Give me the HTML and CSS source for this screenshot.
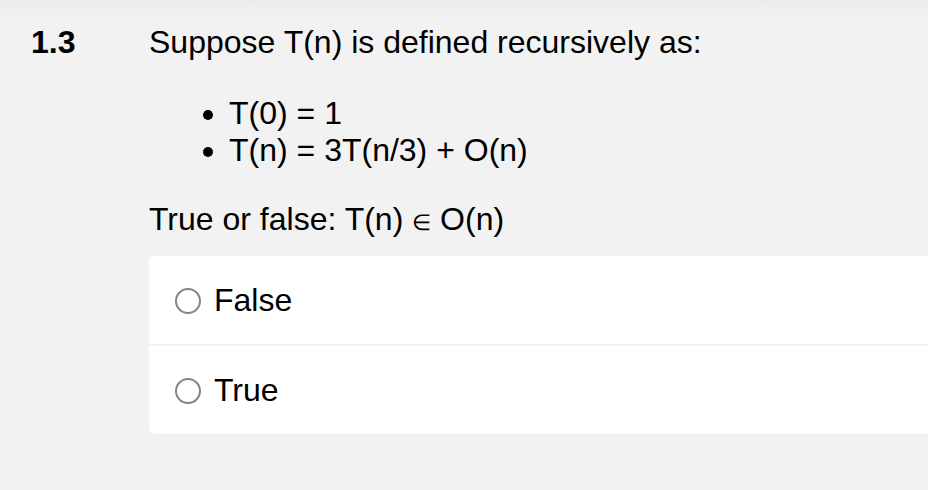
FILE: index.html
```html
<!DOCTYPE html>
<html lang="en">
<head>
<meta charset="utf-8">
<title>Question 1.3</title>
<link rel="stylesheet" href="styles.css">
</head>
<body>
<main class="question">
  <div class="qnum">1.3</div>
  <div class="qbody">
    <p class="prompt">Suppose T(n) is defined recursively as:</p>
    <ul class="defs">
      <li>T(0) = 1</li>
      <li>T(n) = 3T(n/3) + O(n)</li>
    </ul>
    <p class="prompt">True or false: T(n) <span class="elem">&#8712;</span> O(n)</p>
    <div class="choices">
      <label class="choice"><span class="radio"></span><span class="choice-text">False</span></label>
      <label class="choice"><span class="radio"></span><span class="choice-text">True</span></label>
    </div>
  </div>
</main>
</body>
</html>
```

FILE: styles.css
```css
html, body {
  margin: 0;
  padding: 0;
  height: 100%;
}

body {
  background: linear-gradient(to bottom, #ebebeb 0px, #f2f2f2 18px, #f2f2f2 100%);
  font-family: "Liberation Sans", Arial, sans-serif;
  font-size: 32px;
  color: #000;
  overflow: hidden;
}

.question {
  display: grid;
  grid-template-columns: 118px 1fr;
  padding: 24px 0 0 31px;
}

.qnum {
  font-weight: bold;
  line-height: normal;
}

.qbody {
  min-width: 0;
}

.prompt {
  margin: 0;
  line-height: normal;
}

.elem {
  font-size: 22px;
  line-height: 1;
}

.defs {
  margin: 34px 0 32px;
  padding-left: 80px;
  line-height: normal;
}

.choices {
  margin-top: 18px;
  margin-right: -20px;
  background: #fff;
  border-radius: 5px;
  display: flex;
  flex-direction: column;
}

.choice {
  display: flex;
  align-items: center;
  gap: 13px;
  padding: 26px 26px 25px 26px;
  line-height: normal;
}

.choice + .choice {
  border-top: 2px solid #f2f2f2;
}

.radio {
  width: 26px;
  height: 26px;
  box-sizing: border-box;
  border: 2px solid #858585;
  border-radius: 50%;
  background: #fff;
  flex: none;
}
```
